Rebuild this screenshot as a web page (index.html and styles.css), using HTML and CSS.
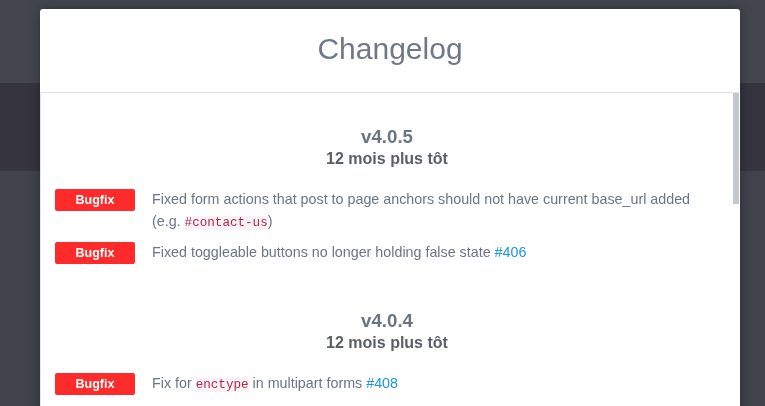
FILE: index.html
```html
<!DOCTYPE html>
<html lang="fr">
<head>
<meta charset="utf-8">
<title>Changelog</title>
<link rel="stylesheet" href="styles.css">
</head>
<body>
<div class="app">
  <div class="topbar"></div>
  <div class="band"></div>
  <div class="rest"></div>
</div>
<div class="overlay">
  <div class="modal">
    <div class="modal-header">
      <h2 class="modal-title">Changelog</h2>
    </div>
    <div class="modal-main">
      <div class="modal-body">
        <section class="release">
          <h3 class="version">v4.0.5</h3>
          <h4 class="when">12 mois plus tôt</h4>
          <ul class="changes">
            <li class="change"><span class="badge">Bugfix</span><p class="desc">Fixed form actions that post to page anchors should not have current base_url added (e.g. <code>#contact-us</code>)</p></li>
            <li class="change"><span class="badge">Bugfix</span><p class="desc">Fixed toggleable buttons no longer holding false state <a href="#">#406</a></p></li>
          </ul>
        </section>
        <section class="release">
          <h3 class="version">v4.0.4</h3>
          <h4 class="when">12 mois plus tôt</h4>
          <ul class="changes">
            <li class="change"><span class="badge">Bugfix</span><p class="desc">Fix for <code>enctype</code> in multipart forms <a href="#">#408</a></p></li>
          </ul>
        </section>
      </div>
      <div class="scrollbar"><div class="thumb"></div></div>
    </div>
  </div>
</div>
</body>
</html>
```

FILE: styles.css
```css
html, body {
  margin: 0;
  padding: 0;
  height: 100%;
  overflow: hidden;
}

body {
  font-family: "Liberation Sans", Arial, sans-serif;
  background: #40434c;
}

.app {
  display: flex;
  flex-direction: column;
  height: 100%;
}

.topbar {
  height: 83px;
  background: #43464f;
}

.band {
  height: 88px;
  background: #36343f;
}

.rest {
  flex: 1;
  background: #40434c;
}

.overlay {
  position: fixed;
  inset: 0;
  display: flex;
  justify-content: flex-start;
  align-items: flex-start;
}

.modal {
  margin: 9px 0 0 40px;
  width: 700px;
  height: 480px;
  background: #fff;
  border-radius: 3px;
  box-shadow: 0 0 12px rgba(0, 0, 0, 0.35);
  display: flex;
  flex-direction: column;
  overflow: hidden;
}

.modal-header {
  height: 83px;
  display: flex;
  align-items: center;
  justify-content: center;
  padding-bottom: 3px;
  box-sizing: border-box;
}

.modal-title {
  margin: 0;
  font-size: 30px;
  font-weight: normal;
  color: #6f7888;
  line-height: 1;
}

.modal-main {
  flex: 1;
  min-height: 0;
  display: flex;
  border-top: 1px solid #e2e2e2;
  border-left: 1px solid #e6e6e6;
  border-right: 1px solid #fff;
}

.modal-body {
  flex: 1;
  min-width: 0;
  overflow: hidden;
  padding: 33px 14px 0;
}

.scrollbar {
  width: 6px;
  background: #fff;
}

.thumb {
  height: 111px;
  background: #c4c8ce;
}

.release {
  margin-bottom: 46px;
}

.version {
  margin: 0;
  text-align: center;
  font-size: 18.72px;
  line-height: 22px;
  font-weight: bold;
  color: #6b7483;
}

.when {
  margin: 1px 0 0;
  text-align: center;
  font-size: 16px;
  line-height: 20px;
  font-weight: bold;
  color: #5b5f66;
}

.changes {
  list-style: none;
  margin: 19px 0 0;
  padding: 0;
  display: flex;
  flex-direction: column;
  gap: 7px;
}

.change {
  display: grid;
  grid-template-columns: 80px 1fr;
  column-gap: 17px;
  align-items: start;
}

.badge {
  margin-top: 1px;
  height: 22px;
  line-height: 22px;
  background: #ff2b2b;
  color: #fff;
  border-radius: 2px;
  text-align: center;
  font-weight: bold;
  font-size: 12.5px;
}

.desc {
  margin: 0;
  font-size: 14.3px;
  line-height: 22px;
  color: #6b7585;
}

code {
  font-family: "Liberation Mono", "DejaVu Sans Mono", monospace;
  font-size: 12.6px;
  color: #b0284f;
  background: #f9f2f4;
}

a {
  color: #1b96e0;
  text-decoration: none;
}
```
